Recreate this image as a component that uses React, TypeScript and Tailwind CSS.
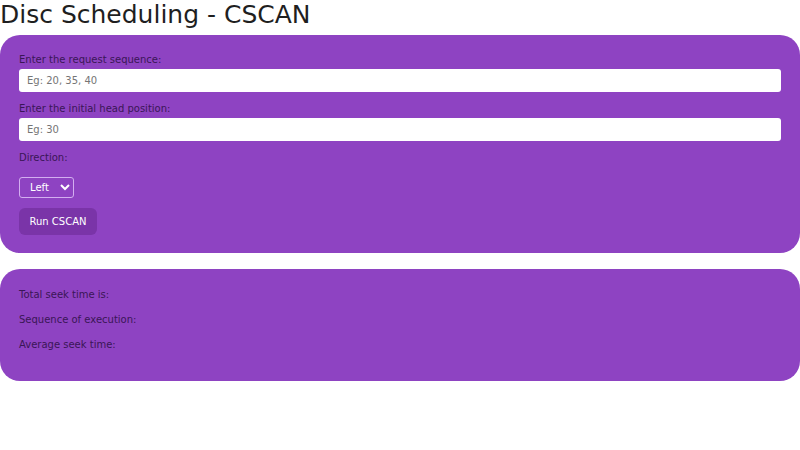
export default function App() {
  return (
    <div className="min-h-[450px] bg-white font-['DejaVu_Sans',sans-serif] text-[#222]">
      <h1 className="h-[35px] text-[25px] leading-[30px] text-[#1f1f1f]">Disc Scheduling - CSCAN</h1>

      <div className="rounded-[20px] bg-[#8e43c2] px-[19px] pt-[19px] pb-[18px] text-[10px] text-[#3a1656]">
        <label className="mb-[3px] block leading-[12px]">Enter the request sequence:</label>
        <input
          className="block h-[23px] w-full rounded-[3px] bg-white px-2 text-[10px] text-[#333] outline-none placeholder:text-[#757575]"
          placeholder="Eg: 20, 35, 40"
        />
        <label className="mt-[11px] mb-[3px] block leading-[12px]">Enter the initial head position:</label>
        <input
          className="block h-[23px] w-full rounded-[3px] bg-white px-2 text-[10px] text-[#333] outline-none placeholder:text-[#757575]"
          placeholder="Eg: 30"
        />
        <label className="mt-[11px] block leading-[12px]">Direction:</label>
        <div className="mt-[13px] flex">
          <select className="h-[21px] w-[55px] rounded-[3px] border border-[#d3aef0] bg-transparent pl-[6px] text-[10px] leading-[19px] text-white outline-none">
            <option className="text-black">Left</option>
            <option className="text-black">Right</option>
          </select>
        </div>
        <button className="mt-[10px] block h-[27px] w-[78px] rounded-[6px] bg-[#7a34a8] text-[10px] text-white">
          Run CSCAN
        </button>
      </div>

      <div className="mt-4 flex flex-col gap-[13px] rounded-[20px] bg-[#8e43c2] px-[19px] pt-[20px] pb-[30px] text-[10px] leading-[12px] text-[#3a1656]">
        <p>Total seek time is:</p>
        <p>Sequence of execution:</p>
        <p>Average seek time:</p>
      </div>
    </div>
  );
}
